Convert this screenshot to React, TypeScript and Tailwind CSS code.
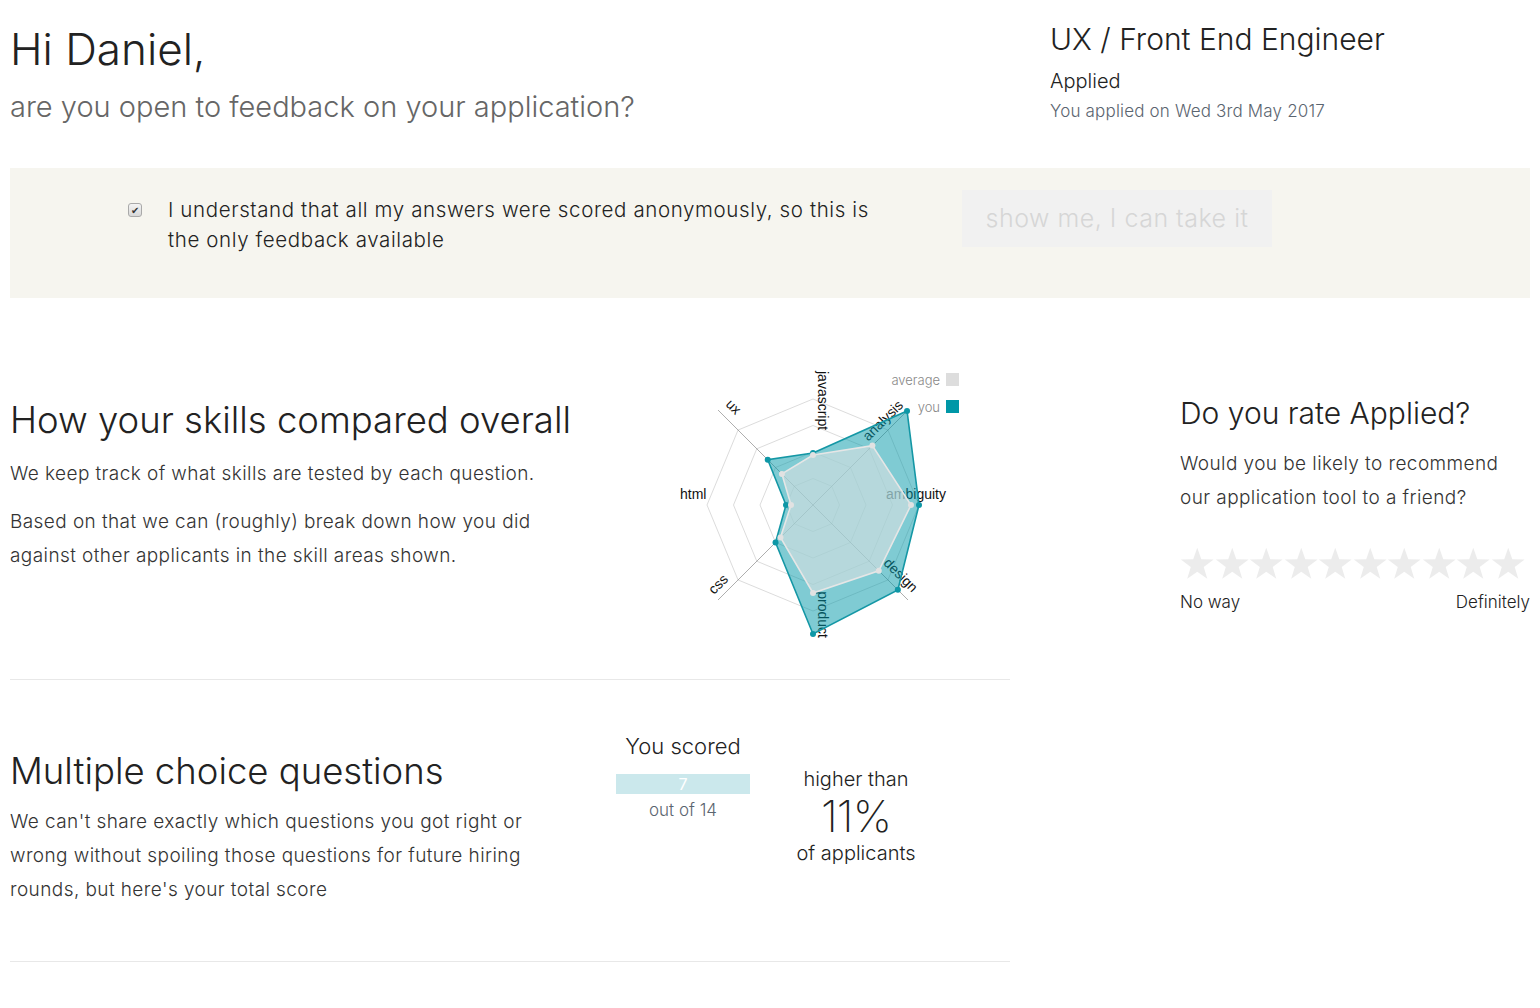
import React from 'react';

const font = { fontFamily: 'Inter, "Open Sans", "Liberation Sans", sans-serif' };

const dirs: [number, number][] = [
  [0, -1],
  [0.7071, -0.7071],
  [1, 0],
  [0.7071, 0.7071],
  [0, 1],
  [-0.7071, 0.7071],
  [-1, 0],
  [-0.7071, -0.7071],
];

// javascript, analysis, ambiguity, design, product, css, html, ux
const you = [52, 133, 106, 120, 129, 53, 27, 64];
const avg = [50, 84, 98, 93, 88, 46, 22, 44];

const C = 150;
const pts = (r: number[]) => r.map((v, i) => [C + dirs[i][0] * v, C + dirs[i][1] * v]);
const poly = (r: number[]) => pts(r).map((p) => p.join(',')).join(' ');

function Radar() {
  const rings = [26.5, 53, 79.5, 106];
  return (
    <svg width="310" height="300" viewBox="0 0 310 300" className="block">
      {rings.map((r) => (
        <polygon key={r} points={poly(Array(8).fill(r))} fill="none" stroke="#dcdcdc" strokeWidth="1" />
      ))}
      <line x1={C - 95} y1={C - 95} x2={C + 95} y2={C + 95} stroke="#777" strokeWidth="0.6" />
      <line x1={C - 95} y1={C + 95} x2={C + 95} y2={C - 95} stroke="#777" strokeWidth="0.6" />

      <g fontFamily='"Liberation Sans", Arial, sans-serif' fontSize="14" fill="#111">
        <text transform={`translate(${C + 5},${C - 134}) rotate(90)`}>javascript</text>
        <text textAnchor="end" transform={`translate(${C + 91},${C - 99}) rotate(-45)`}>analysis</text>
        <text x={C + 133} y={C - 6} textAnchor="end">ambiguity</text>
        <text textAnchor="end" transform={`translate(${C + 99},${C + 88}) rotate(45)`}>design</text>
        <text textAnchor="end" transform={`translate(${C + 5},${C + 133}) rotate(90)`}>product</text>
        <text transform={`translate(${C - 99},${C + 90}) rotate(-45)`}>css</text>
        <text x={C - 133} y={C - 6}>html</text>
        <text transform={`translate(${C - 88},${C - 100}) rotate(45)`}>ux</text>
      </g>

      <polygon points={poly(you)} fill="#0097a7" fillOpacity="0.5" stroke="#1497a5" strokeWidth="1.6" />
      {pts(you).map(([x, y], i) => (
        <circle key={i} cx={x} cy={y} r="3" fill="#0e97a6" />
      ))}
      <polygon points={poly(avg)} fill="#e4e4e4" fillOpacity="0.55" stroke="#e6e6e6" strokeWidth="1.6" />
      {pts(avg).map(([x, y], i) => (
        <circle key={i} cx={x} cy={y} r="3" fill="#e2e2e2" />
      ))}

      <g fontFamily='Inter, sans-serif' fontWeight="300" fontSize="13" fill="#888">
        <text x="277" y="30" textAnchor="end">average</text>
        <rect x="283" y="18" width="13" height="13" fill="#dddddd" />
        <text x="277" y="57" textAnchor="end">you</text>
        <rect x="283" y="45" width="13" height="13" fill="#0097a7" />
      </g>
    </svg>
  );
}

function Star() {
  return (
    <svg width="34.5" height="33" viewBox="0 0 24 23">
      <polygon
        points="12,0.5 14.8,8.6 23.4,8.7 16.5,13.9 19,22.2 12,17.2 5,22.2 7.5,13.9 0.6,8.7 9.2,8.6"
        fill="#ececec"
      />
    </svg>
  );
}

export default function App() {
  return (
    <div className="min-h-screen bg-white px-[10px] text-[#333]" style={font}>
      {/* Header */}
      <header className="flex h-[168px]">
        <div className="w-[1040px] pt-[21px]">
          <h1 className="text-[44px] font-light leading-[56px] text-[#222]">Hi Daniel,</h1>
          <p className="mt-[12px] text-[29px] font-light leading-[36px] text-[#666]">are you open to feedback on your application?</p>
        </div>
        <div className="pt-[18px]">
          <h2 className="text-[30px] font-light leading-[42px] text-[#222]">UX / Front End Engineer</h2>
          <p className="mt-[7px] text-[20px] font-light leading-[28px] text-[#222]">Applied</p>
          <p className="mt-[2px] text-[17px] font-light leading-[28px] tracking-[0.01em] text-[#5b6570]">You applied on Wed 3rd May 2017</p>
        </div>
      </header>

      {/* Consent band */}
      <section className="flex h-[130px] items-start bg-[#f6f5ef] pl-[118px] pt-[27px]">
        <span className="mt-[8px] flex h-[14px] w-[14px] shrink-0 items-center justify-center rounded-[3px] border border-[#a9a9a9] bg-gradient-to-b from-[#f4f4f4] to-[#d8d8d8] text-[10px] leading-none text-[#333]">
          ✔
        </span>
        <p className="ml-[26px] w-[720px] text-[20.5px] font-light leading-[30px] tracking-[0.03em] text-[#222]">
          I understand that all my answers were scored anonymously, so this is the only feedback available
        </p>
        <button className="ml-[74px] -mt-[5px] h-[57px] w-[310px] shrink-0 bg-[#f1f1f1] text-[25px] font-light tracking-[0.02em] text-[#d6d6d6]">
          show me, I can take it
        </button>
      </section>

      <div className="flex">
        <main className="w-[1000px] shrink-0">
          {/* Skills */}
          <section className="flex h-[382px] border-b border-[#e8e8e8]">
            <div className="w-[653px] pt-[97px]">
              <h2 className="text-[36.5px] font-light leading-[50px] text-[#222]">How your skills compared overall</h2>
              <p className="mt-[12px] text-[19px] font-light leading-[34px] tracking-[0.022em]">We keep track of what skills are tested by each question.</p>
              <p className="mt-[14px] w-[545px] text-[19px] font-light leading-[34px] tracking-[0.022em]">
                Based on that we can (roughly) break down how you did against other applicants in the skill areas shown.
              </p>
            </div>
            <div className="pt-[57px]">
              <Radar />
            </div>
          </section>

          {/* Multiple choice */}
          <section className="flex h-[282px] border-b border-[#e8e8e8]">
            <div className="w-[606px] pt-[66px]">
              <h2 className="text-[36.5px] font-light leading-[50px] text-[#222]">Multiple choice questions</h2>
              <p className="mt-[9px] w-[535px] text-[19px] font-light leading-[34px] tracking-[0.022em]">
                We can't share exactly which questions you got right or wrong without spoiling those questions for future hiring rounds, but here's your total score
              </p>
            </div>
            <div className="flex w-[134px] flex-col items-center pt-[50px]">
              <p className="text-[22px] font-light leading-[32px] text-[#222]">You scored</p>
              <div className="mt-[12px] flex h-[20px] w-[134px] items-center justify-center bg-[#cbe8ec] text-[16px] leading-none text-white">
                7
              </div>
              <p className="mt-[2px] text-[17px] font-light leading-[28px] text-[#5b6570]">out of 14</p>
            </div>
            <div className="ml-[21px] flex w-[170px] flex-col items-center pt-[87px]">
              <p className="text-[20px] font-light leading-[24px] text-[#222]">higher than</p>
              <p className="text-[44px] font-extralight leading-[50px] tracking-[-0.02em] text-[#222]">11%</p>
              <p className="text-[20px] font-light leading-[24px] text-[#222]">of applicants</p>
            </div>
          </section>
        </main>

        {/* Sidebar */}
        <aside className="ml-[170px] w-[350px] pt-[93px]">
          <h2 className="text-[30px] font-light leading-[44px] text-[#222]">Do you rate Applied?</h2>
          <p className="mt-[12px] w-[340px] text-[19px] font-light leading-[34px] tracking-[0.022em]">
            Would you be likely to recommend our application tool to a friend?
          </p>
          <div className="mt-[32px] flex">
            {Array.from({ length: 10 }).map((_, i) => (
              <Star key={i} />
            ))}
          </div>
          <div className="mt-[8px] flex justify-between text-[17px] font-light leading-[28px] text-[#222]">
            <span>No way</span>
            <span>Definitely</span>
          </div>
        </aside>
      </div>
    </div>
  );
}
